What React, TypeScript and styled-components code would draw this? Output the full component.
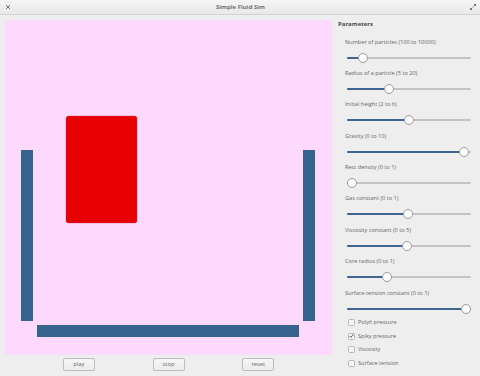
import React from "react";
import styled, { createGlobalStyle } from "styled-components";

const Global = createGlobalStyle`
  html, body { margin: 0; padding: 0; background: #ededed; }
  body { font-family: "Open Sans", "DejaVu Sans", sans-serif; }
`;

const Window = styled.div`
  width: 480px;
  height: 376px;
  display: flex;
  flex-direction: column;
  background: #eeeeee;
  overflow: hidden;
`;

const TitleBar = styled.div`
  height: 15px;
  box-sizing: border-box;
  border-bottom: 1px solid #d2d2d2;
  background: linear-gradient(#f5f5f5, #e9e9e9);
  display: flex;
  align-items: center;
  justify-content: space-between;
  padding: 0 4px 0 5px;
`;

const Title = styled.div`
  font-size: 6px;
  font-weight: 700;
  color: #707070;
  line-height: 14px;
`;

const TitleIcon = styled.svg`
  width: 6px;
  height: 6px;
  display: block;
`;

const Content = styled.div`
  flex: 1;
  display: flex;
`;

const LeftColumn = styled.div`
  display: flex;
  flex-direction: column;
  padding: 5px 0 0 5px;
`;

const Canvas = styled.svg`
  width: 327px;
  height: 335px;
  display: block;
  background: #fdd9fd;
`;

const ButtonRow = styled.div`
  display: flex;
  justify-content: space-evenly;
  padding-top: 3px;
`;

const Button = styled.button`
  width: 32px;
  height: 13px;
  padding: 0;
  box-sizing: border-box;
  border: 1px solid #bdbdbd;
  border-radius: 2px;
  background: linear-gradient(#f6f6f6, #ececec);
  font-family: "Open Sans", sans-serif;
  font-size: 5.8px;
  color: #666;
  line-height: 11px;
`;

const Panel = styled.div`
  flex: 1;
  padding: 5px 0 0 6px;
  display: flex;
  flex-direction: column;
`;

const PanelTitle = styled.div`
  font-size: 6px;
  font-weight: 700;
  color: #4a4a4a;
  line-height: 9px;
  margin-bottom: 8.5px;
`;

const Params = styled.div`
  display: flex;
  flex-direction: column;
  gap: 4.4px;
  padding-left: 7px;
`;

const ParamRow = styled.div`
  display: flex;
  flex-direction: column;
  gap: 4px;
`;

const Label = styled.div`
  font-size: 5.6px;
  color: #666;
  line-height: 9px;
  white-space: nowrap;
`;

const SliderBox = styled.div`
  position: relative;
  height: 14px;
  width: 124px;
  margin-left: 2px;
`;

const Track = styled.div`
  position: absolute;
  left: 0;
  right: 0;
  top: 6px;
  height: 2px;
  background: #c4c4c4;
  border-radius: 1px;
`;

const Fill = styled.div`
  position: absolute;
  left: 0;
  top: 6px;
  height: 2px;
  background: #3e6590;
  border-radius: 1px;
`;

const Thumb = styled.div`
  position: absolute;
  top: 2px;
  width: 10px;
  height: 10px;
  margin-left: -5px;
  box-sizing: border-box;
  border-radius: 50%;
  border: 1px solid #9c9c9c;
  background: #fdfdfd;
`;

const Checks = styled.div`
  display: flex;
  flex-direction: column;
  padding-left: 10px;
`;

const CheckRow = styled.div`
  height: 13.6px;
  display: flex;
  align-items: center;
  gap: 3px;
`;

const Box = styled.div`
  width: 7px;
  height: 7px;
  box-sizing: border-box;
  border: 1px solid #b6b6b6;
  border-radius: 1.5px;
  background: #f8f8f8;
  display: flex;
  align-items: center;
  justify-content: center;
`;

const CheckLabel = styled.span`
  font-size: 5.6px;
  color: #666;
  line-height: 9px;
`;

const params: [string, number][] = [
  ["Number of particles (100 to 10000)", 0.096],
  ["Radius of a particle (5 to 20)", 0.325],
  ["Initial height (2 to 6)", 0.5],
  ["Gravity (0 to 10)", 0.98],
  ["Rest density (0 to 1)", 0],
  ["Gas constant (0 to 1)", 0.49],
  ["Viscosity constant (0 to 5)", 0.48],
  ["Core radius (0 to 1)", 0.31],
  ["Surface tension constant (0 to 1)", 1],
];

const checks: [string, boolean][] = [
  ["Poly6 pressure", false],
  ["Spiky pressure", true],
  ["Viscosity", false],
  ["Surface tension", false],
];

function Slider({ value }: { value: number }) {
  const x = 5 + value * 114;
  return (
    <SliderBox>
      <Track />
      <Fill style={{ width: x }} />
      <Thumb style={{ left: x }} />
    </SliderBox>
  );
}

export default function App() {
  return (
    <>
      <Global />
      <Window>
        <TitleBar>
          <TitleIcon viewBox="0 0 6 6">
            <path d="M1 1 L5 5 M5 1 L1 5" stroke="#777" strokeWidth="1" />
          </TitleIcon>
          <Title>Simple Fluid Sim</Title>
          <TitleIcon viewBox="0 0 6 6">
            <path d="M3.5 2.5 L5.5 0.5 M4 0.5 H5.5 V2 M2.5 3.5 L0.5 5.5 M0.5 4 V5.5 H2" stroke="#666" strokeWidth="0.9" fill="none" />
          </TitleIcon>
        </TitleBar>
        <Content>
          <LeftColumn>
            <Canvas viewBox="0 0 327 335">
              <rect x="16" y="130" width="12" height="171" fill="#36648f" />
              <rect x="298" y="130" width="12" height="171" fill="#36648f" />
              <rect x="32" y="305" width="262" height="12" fill="#36648f" />
              <rect
                x="61"
                y="96"
                width="71"
                height="107"
                rx="2.5"
                fill="#e60000"
                stroke="#d8306a"
                strokeWidth="0.6"
                strokeDasharray="1 1"
              />
            </Canvas>
            <ButtonRow>
              <Button>play</Button>
              <Button>stop</Button>
              <Button>reset</Button>
            </ButtonRow>
          </LeftColumn>
          <Panel>
            <PanelTitle>Parameters</PanelTitle>
            <Params>
              {params.map(([label, v]) => (
                <ParamRow key={label}>
                  <Label>{label}</Label>
                  <Slider value={v} />
                </ParamRow>
              ))}
            </Params>
            <Checks>
              {checks.map(([label, on]) => (
                <CheckRow key={label}>
                  <Box>
                    {on && (
                      <svg width="6" height="6" viewBox="0 0 6 6">
                        <path d="M0.8 3.2 L2.3 4.7 L5.2 1" stroke="#333" strokeWidth="1" fill="none" />
                      </svg>
                    )}
                  </Box>
                  <CheckLabel>{label}</CheckLabel>
                </CheckRow>
              ))}
            </Checks>
          </Panel>
        </Content>
      </Window>
    </>
  );
}
